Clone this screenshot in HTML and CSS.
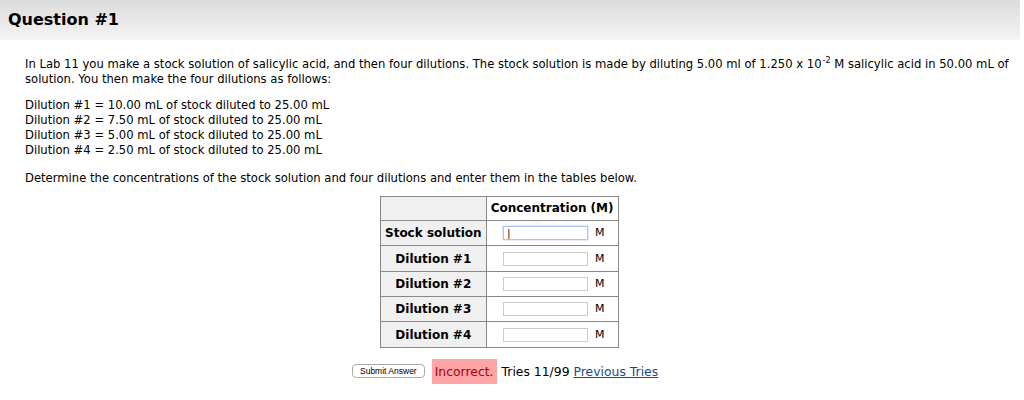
FILE: index.html
```html
<!DOCTYPE html>
<html lang="en">
<head>
    <meta charset="UTF-8">
    <title>Question #1</title>
    <link rel="stylesheet" href="styles.css">
</head>
<body>
    <div class="question-header">Question #1</div>
    <div class="question-body">
        <p>In Lab 11 you make a stock solution of salicylic acid, and then four dilutions. The stock solution is made by diluting 5.00 ml of 1.250 x 10<sup>-2</sup> M salicylic acid in 50.00 mL of solution. You then make the four dilutions as follows:</p>
        <p class="dilutions">
            Dilution #1 = 10.00 mL of stock diluted to 25.00 mL<br>
            Dilution #2 = 7.50 mL of stock diluted to 25.00 mL<br>
            Dilution #3 = 5.00 mL of stock diluted to 25.00 mL<br>
            Dilution #4 = 2.50 mL of stock diluted to 25.00 mL
        </p>
        <p class="instructions">Determine the concentrations of the stock solution and four dilutions and enter them in the tables below.</p>

        <table class="answer-table">
            <tr>
                <th class="corner"></th>
                <th class="col-head">Concentration (M)</th>
            </tr>
            <tr>
                <th>Stock solution</th>
                <td><input type="text" class="answer focused" value="|"> M</td>
            </tr>
            <tr>
                <th>Dilution #1</th>
                <td><input type="text" class="answer"> M</td>
            </tr>
            <tr>
                <th>Dilution #2</th>
                <td><input type="text" class="answer"> M</td>
            </tr>
            <tr>
                <th>Dilution #3</th>
                <td><input type="text" class="answer"> M</td>
            </tr>
            <tr>
                <th>Dilution #4</th>
                <td><input type="text" class="answer"> M</td>
            </tr>
        </table>

        <div class="submit-row">
            <button type="button" class="submit-btn">Submit Answer</button>
            <span class="incorrect">Incorrect.</span>
            <span class="tries">Tries 11/99 <a href="#">Previous Tries</a></span>
        </div>
    </div>
</body>
</html>
```

FILE: styles.css
```css
body {
    margin: 0;
    font-family: Verdana, "DejaVu Sans", sans-serif;
    font-size: 11.6px;
    color: #000;
    background: #fff;
}
.question-header {
    width: 1020px;
    height: 40px;
    box-sizing: border-box;
    padding: 10px 8px 0;
    font-size: 16px;
    font-weight: bold;
    background: linear-gradient(#dcdcdc, #f4f4f4);
}
.question-body {
    padding: 17px 10px 0 25px;
}
p {
    margin: 0 0 12px;
    line-height: 14.7px;
}
p.dilutions {
    margin-bottom: 14px;
}
p.instructions {
    margin-bottom: 10px;
}
sup {
    font-size: 8px;
    line-height: 0;
    margin-left: 1px;
}
.answer-table {
    border-collapse: collapse;
    margin: 0 0 0 355px;
    border: 1px solid #555;
}
.answer-table th,
.answer-table td {
    border: 1px solid #888;
    height: 23px;
    padding: 0 3px;
}
.answer-table th {
    font-size: 12px;
    background: #f0f0f0;
    padding: 0 4px;
}
.answer-table th.col-head {
    background: #fff;
    padding: 0 2px;
}
.answer-table td {
    font-size: 11px;
    padding: 0 13px 0 16px;
}
.answer-table tr:not(:first-child) th,
.answer-table tr:not(:first-child) td {
    height: 24.4px;
}
.answer {
    width: 85px;
    height: 14px;
    box-sizing: border-box;
    border: 1px solid #ccc;
    margin: 0 4px 0 0;
    padding: 0 4px;
    font-size: 10px;
    vertical-align: middle;
}
.answer.focused {
    border-color: #aac4ee;
    box-shadow: 0 0 2px #aac4ee;
}
.submit-row {
    margin: 11px 0 0 327px;
    display: flex;
    align-items: center;
    gap: 5px;
    font-size: 12.4px;
}
.submit-btn {
    font-family: "Liberation Sans", Arial, sans-serif;
    font-size: 8.5px;
    padding: 1px 7px;
    background: #fff;
    border: 1px solid #aaa;
    border-radius: 4px;
    height: 14px;
    margin-right: 2px;
}
.incorrect {
    background: #ffa5a5;
    color: #a00010;
    padding: 5px 3px;
}
.tries a {
    color: #1a4a8a;
}
```
